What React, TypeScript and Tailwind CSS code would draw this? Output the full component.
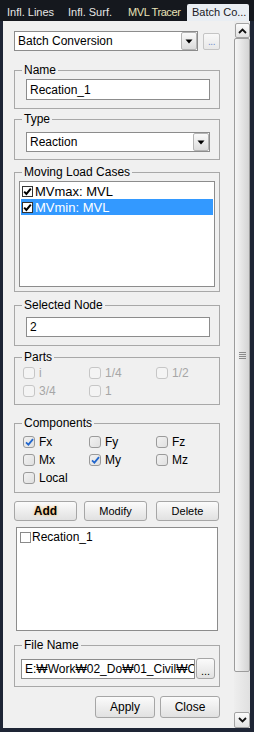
import React from "react";

const FONT = "font-['Liberation_Sans','DejaVu_Sans','Noto_Sans_CJK_KR',sans-serif]";

function Group({ label, className = "", children }: { label: string; className?: string; children?: React.ReactNode }) {
  return (
    <fieldset className={`w-[206px] border border-[#a8a8a8] ${className}`}>
      <legend className="ml-[7px] px-[2px] text-[12px] leading-[14px] text-black">{label}</legend>
      {children}
    </fieldset>
  );
}

function DropBtn() {
  return (
    <div className="w-[16px] h-[18px] mt-[0px] mr-[0px] rounded-[2px] border border-[#b4b4b4] bg-linear-to-b from-[#fafafa] to-[#dcdcdc] flex items-center justify-center">
      <svg width="8" height="5" viewBox="0 0 8 5">
        <path d="M0.5 0.5 H7.5 L4 4.5 Z" fill="#000" />
      </svg>
    </div>
  );
}

function Combo({ text, w }: { text: string; w: string }) {
  return (
    <div className={`${w} h-[20px] border border-[#8c8c8c] bg-white flex items-center justify-between`}>
      <span className="pl-[3px] text-[12px] leading-[18px] text-black">{text}</span>
      <DropBtn />
    </div>
  );
}

function TextBox({ text, className = "" }: { text: string; className?: string }) {
  return (
    <div className={`h-[21px] border border-[#8c8c8c] bg-white flex items-center overflow-hidden whitespace-nowrap ${className}`}>
      <span className="pl-[3px] text-[12px] leading-[18px] text-black">{text}</span>
    </div>
  );
}

function ListCheck({ checked, gray }: { checked?: boolean; gray?: boolean }) {
  return (
    <div className={`w-[11px] h-[11px] border ${gray ? "border-[#8a8a8a]" : "border-[#333]"} bg-white flex items-center justify-center shrink-0`}>
      {checked && (
        <svg width="9" height="9" viewBox="0 0 9 9">
          <path d="M1.2 4.6 L3.4 6.9 L7.8 1.6" stroke="#000" strokeWidth="2" fill="none" />
        </svg>
      )}
    </div>
  );
}

function Check({ label, checked, disabled }: { label: string; checked?: boolean; disabled?: boolean }) {
  return (
    <div className="flex items-center h-[18px]">
      <div
        className={`w-[12px] h-[12px] rounded-[3px] border flex items-center justify-center ${
          disabled ? "border-[#c6c6c6] bg-[#f4f4f4]" : "border-[#9a9a9a] bg-linear-to-br from-[#f2f2f2] to-[#e0e0e0]"
        }`}
      >
        {checked && (
          <svg width="9" height="8" viewBox="0 0 9 8">
            <path d="M1 4.4 L3.4 6.6 L8 1.2" stroke="#2266cc" strokeWidth="1.8" fill="none" />
          </svg>
        )}
      </div>
      <span className={`ml-[4px] text-[12px] leading-[14px] ${disabled ? "text-[#a6a6a6]" : "text-black"}`}>{label}</span>
    </div>
  );
}

function Btn({ children, className = "" }: { children: React.ReactNode; className?: string }) {
  return (
    <div
      className={`flex items-center justify-center rounded-[3px] border border-[#a6a6a6] bg-linear-to-b from-[#fbfbfb] to-[#e1e1e1] text-[11px] text-black ${className}`}
    >
      {children}
    </div>
  );
}

function Scrollbar() {
  return (
    <div className="w-[16px] h-full flex flex-col bg-[#ececec]">
      <div className="h-[17px] flex items-end justify-center">
        <div className="w-[15px] h-[15px] rounded-[2px] border border-[#a2a2a2] bg-linear-to-b from-[#fbfbfb] to-[#e2e2e2] flex items-center justify-center">
          <svg width="9" height="6" viewBox="0 0 9 6">
            <path d="M1 5 L4.5 1.6 L8 5" stroke="#111" strokeWidth="1.8" fill="none" />
          </svg>
        </div>
      </div>
      <div className="h-[634px] rounded-[2px] border border-[#9c9c9c] bg-linear-to-r from-[#f6f6f6] to-[#d4d4d4] flex items-center justify-center">
        <div className="flex flex-col gap-[1px]">
          <div className="w-[7px] h-[1px] bg-[#8a8a8a]" />
          <div className="w-[7px] h-[1px] bg-[#8a8a8a]" />
          <div className="w-[7px] h-[1px] bg-[#8a8a8a]" />
          <div className="w-[7px] h-[1px] bg-[#8a8a8a]" />
        </div>
      </div>
      <div className="flex-1 bg-linear-to-r from-[#eeeeee] to-[#e0e0e0]" />
      <div className="h-[16px] w-[16px] rounded-[2px] border border-[#a2a2a2] bg-linear-to-b from-[#fbfbfb] to-[#e2e2e2] flex items-center justify-center">
        <svg width="9" height="6" viewBox="0 0 9 6">
          <path d="M1 1 L4.5 4.4 L8 1" stroke="#111" strokeWidth="1.8" fill="none" />
        </svg>
      </div>
    </div>
  );
}

export default function App() {
  return (
    <div className={`w-[254px] h-[732px] bg-[#1e2535] flex flex-col overflow-hidden ${FONT}`}>
      {/* Tab bar */}
      <div className="h-[21px] bg-[#15181e] flex items-end text-[11px] whitespace-nowrap">
        <div className="w-[61px] h-[17px] pl-[7px] leading-[16px] text-[#e6e6e6]">Infl. Lines</div>
        <div className="w-[60px] h-[17px] pl-[7px] leading-[16px] text-[#e6e6e6]">Infl. Surf.</div>
        <div className="w-[66px] h-[17px] pl-[7px] leading-[16px] text-[#e8e2b8] tracking-[-0.4px]">MVL Tracer</div>
        <div className="w-[62px] h-[17px] pl-[5px] leading-[16px] bg-[#e9eef3] text-[#1a1a24] rounded-t-[2px]">Batch Co...</div>
      </div>

      {/* Body */}
      <div className="h-[707px] flex pl-[3px] pr-[4px]">
        <div className="w-[231px] h-full bg-[#f0f0f0] pl-[11px] flex flex-col">
          {/* Top combo */}
          <div className="mt-[10px] flex items-center">
            <Combo text="Batch Conversion" w="w-[184px]" />
            <div className="ml-[5px] w-[17px] h-[17px] rounded-[2px] border border-[#c4c4c4] bg-linear-to-b from-[#f8f8f8] to-[#e8e8e8] flex items-end justify-center pb-[3px]">
              <span className="text-[10px] leading-[8px] text-[#6f8fcf] tracking-[-0.5px]">...</span>
            </div>
          </div>

          {/* Name */}
          <Group label="Name" className="mt-[12px]">
            <div className="pl-[11px] pt-[2px] pb-[8px]">
              <TextBox text="Recation_1" className="w-[184px]" />
            </div>
          </Group>

          {/* Type */}
          <Group label="Type" className="mt-[3px]">
            <div className="pl-[11px] pt-[6px] pb-[7px]">
              <Combo text="Reaction" w="w-[184px]" />
            </div>
          </Group>

          {/* Moving Load Cases */}
          <Group label="Moving Load Cases" className="mt-[5px]">
            <div className="pl-[4px] pt-[2px] pb-[4px]">
              <div className="w-[196px] h-[106px] border border-[#8c8c8c] bg-white p-[1px] text-[13px]">
                <div className="h-[16px] flex items-center pl-[1px]">
                  <ListCheck checked />
                  <span className="ml-[2px] leading-[15px] text-black">MVmax: MVL</span>
                </div>
                <div className="h-[16px] flex items-center pl-[1px] bg-[#3399ff]">
                  <ListCheck checked />
                  <span className="ml-[2px] leading-[15px] text-white">MVmin: MVL</span>
                </div>
              </div>
            </div>
          </Group>

          {/* Selected Node */}
          <Group label="Selected Node" className="mt-[6px]">
            <div className="pl-[11px] pt-[5px] pb-[8px]">
              <TextBox text="2" className="w-[184px] !h-[20px]" />
            </div>
          </Group>

          {/* Parts */}
          <Group label="Parts" className="mt-[4px]">
            <div className="pl-[8px] pt-[0px] pb-[4px] grid grid-cols-[66px_67px_1fr]">
              <Check label="i" disabled />
              <Check label="1/4" disabled />
              <Check label="1/2" disabled />
              <Check label="3/4" disabled />
              <Check label="1" disabled />
            </div>
          </Group>

          {/* Components */}
          <Group label="Components" className="mt-[11px]">
            <div className="pl-[8px] pt-[3px] pb-[5px] grid grid-cols-[66px_67px_1fr]">
              <Check label="Fx" checked />
              <Check label="Fy" />
              <Check label="Fz" />
              <Check label="Mx" />
              <Check label="My" checked />
              <Check label="Mz" />
              <Check label="Local" />
            </div>
          </Group>

          {/* Buttons */}
          <div className="mt-[8px] flex">
            <Btn className="w-[63px] h-[20px] font-bold text-[12px] [text-shadow:0_0_3px_#ffb347]">Add</Btn>
            <Btn className="ml-[7px] w-[63px] h-[20px]">Modify</Btn>
            <Btn className="ml-[9px] w-[63px] h-[20px]">Delete</Btn>
          </div>

          {/* Result list */}
          <div className="mt-[6px] ml-[2px] w-[202px] h-[104px] border border-[#8c8c8c] bg-white p-[1px]">
            <div className="h-[16px] flex items-center pl-[2px]">
              <ListCheck gray />
              <span className="ml-[1px] text-[12px] leading-[15px] text-black">Recation_1</span>
            </div>
          </div>

          {/* File Name */}
          <Group label="File Name" className="mt-[7px]">
            <div className="pl-[6px] pt-[6px] pb-[7px] flex items-center">
              <TextBox text="E:₩Work₩02_Do₩01_Civil₩C" className="w-[174px] !h-[20px]" />
              <Btn className="ml-[1px] w-[19px] h-[21px]">
                <span className="text-[11px] leading-[10px] pt-[4px]">...</span>
              </Btn>
            </div>
          </Group>

          {/* Apply / Close */}
          <div className="mt-[9px] w-[206px] flex justify-end">
            <Btn className="w-[60px] h-[22px] text-[12px]">Apply</Btn>
            <Btn className="ml-[5px] w-[60px] h-[22px] text-[12px]">Close</Btn>
          </div>
        </div>
        <Scrollbar />
      </div>
    </div>
  );
}
